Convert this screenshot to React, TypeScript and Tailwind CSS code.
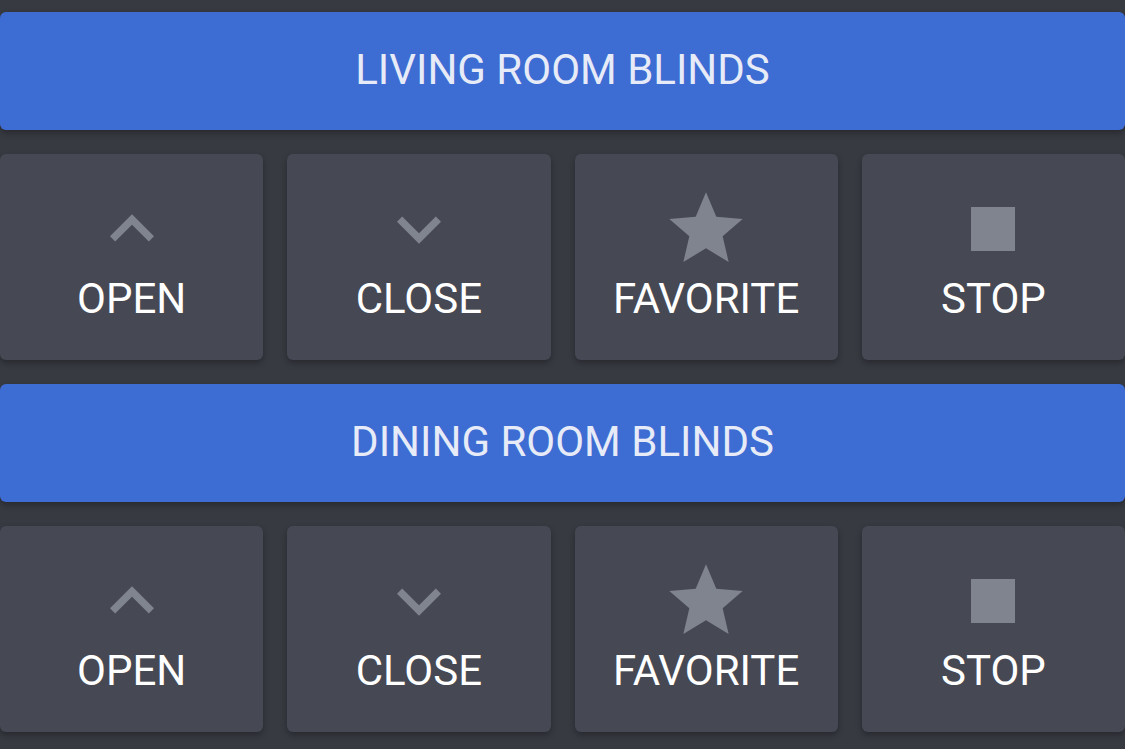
import type { ReactNode } from "react";

const ChevronUp = () => (
  <svg viewBox="0 0 24 24" className="w-[88px] h-[88px] fill-[#80848e]">
    <path d="M7.41 15.41L12 10.83l4.59 4.58L18 14l-6-6-6 6z" />
  </svg>
);

const ChevronDown = () => (
  <svg viewBox="0 0 24 24" className="w-[88px] h-[88px] fill-[#80848e]">
    <path d="M7.41 8.59L12 13.17l4.59-4.58L18 10l-6 6-6-6z" />
  </svg>
);

const Star = () => (
  <svg viewBox="0 0 24 24" className="w-[88px] h-[88px] fill-[#80848e]">
    <path d="M12 17.27L18.18 21l-1.64-7.03L22 9.24l-7.19-.61L12 2 9.19 8.63 2 9.24l5.46 4.73L5.82 21z" />
  </svg>
);

const Stop = () => (
  <svg viewBox="0 0 24 24" className="w-[88px] h-[88px] fill-[#80848e]">
    <path d="M6 6h12v12H6z" />
  </svg>
);

const ActionButton = ({ icon, label }: { icon: ReactNode; label: string }) => (
  <button className="flex flex-col items-center h-[206px] pt-[31px] rounded-md bg-[#464953] shadow-[0_3px_6px_rgba(0,0,0,0.3)]">
    {icon}
    <span className="text-[42px] leading-[51px] text-white">{label}</span>
  </button>
);

const BlindsGroup = ({ title }: { title: string }) => (
  <div className="flex flex-col gap-6">
    <div className="flex items-center justify-center h-[118px] rounded-md bg-[#3d6cd3] shadow-[0_3px_6px_rgba(0,0,0,0.3)]">
      <span className="text-[42px] leading-none pb-0.5 text-[#e6ebf7]">{title}</span>
    </div>
    <div className="grid grid-cols-4 gap-6">
      <ActionButton icon={<ChevronUp />} label="OPEN" />
      <ActionButton icon={<ChevronDown />} label="CLOSE" />
      <ActionButton icon={<Star />} label="FAVORITE" />
      <ActionButton icon={<Stop />} label="STOP" />
    </div>
  </div>
);

const App = () => {
  return (
    <div className="w-full h-screen overflow-hidden bg-[#383a42] pt-3 flex flex-col gap-6 font-[Roboto,sans-serif]">
      <BlindsGroup title="LIVING ROOM BLINDS" />
      <BlindsGroup title="DINING ROOM BLINDS" />
    </div>
  );
};

export default App;
